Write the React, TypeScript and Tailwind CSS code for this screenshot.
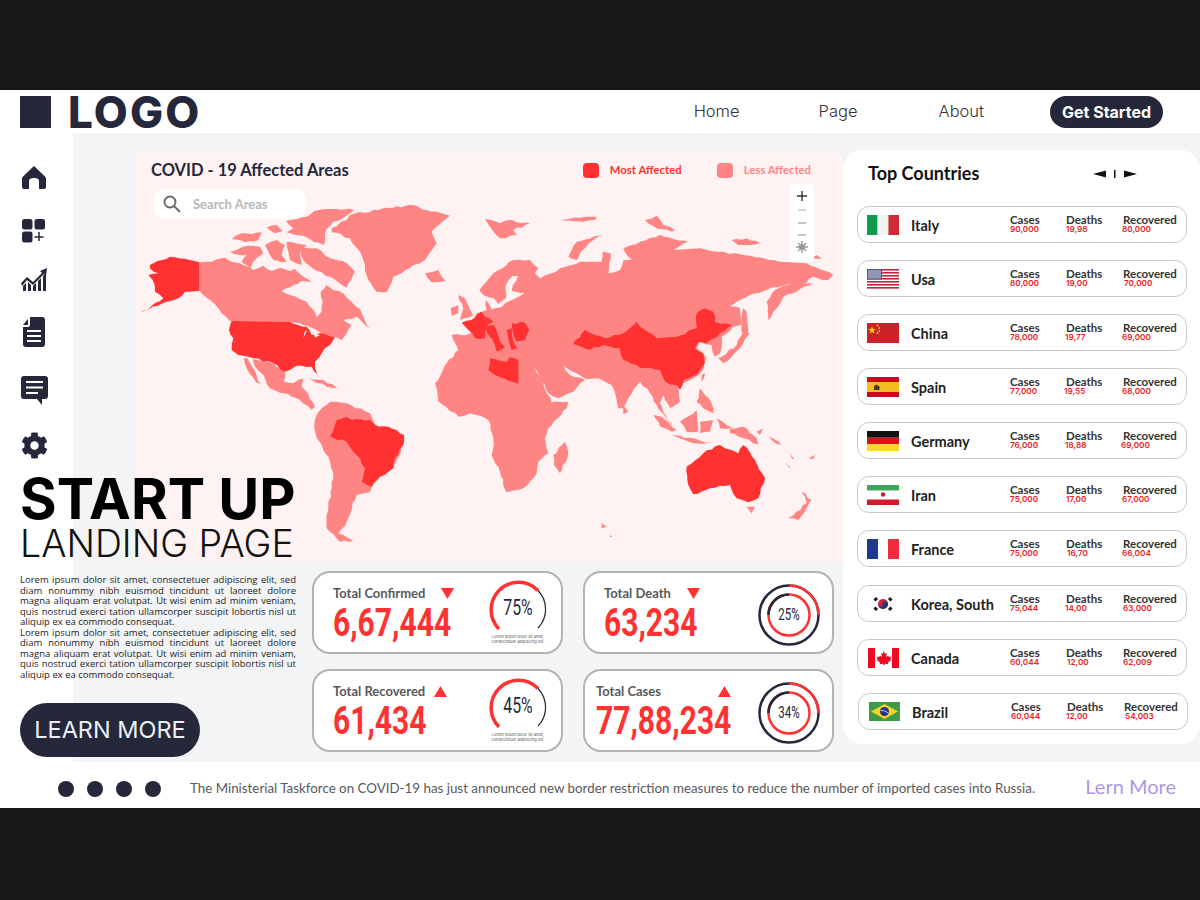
import { FaCog } from 'react-icons/fa';

const NAVY = '#25273a';
const RED = '#ff3131';
const PINK = '#ff8585';
const PANEL = '#fef2f3';

type Country = {
  name: string;
  flag: string;
  cases: string;
  deaths: string;
  recovered: string;
  // little nudges, the values don't line up with their labels in the design
  dOff: number;
  rOff: number;
};

const countries: Country[] = [
  { name: 'Italy', flag: 'it', cases: '90,000', deaths: '19,98', recovered: '80,000', dOff: 0, rOff: -1 },
  { name: 'Usa', flag: 'us', cases: '80,000', deaths: '19,00', recovered: '70,000', dOff: 0, rOff: 1 },
  { name: 'China', flag: 'cn', cases: '78,000', deaths: '19,77', recovered: '69,000', dOff: -1, rOff: -1 },
  { name: 'Spain', flag: 'es', cases: '77,000', deaths: '19,55', recovered: '68,000', dOff: -2, rOff: -1 },
  { name: 'Germany', flag: 'de', cases: '76,000', deaths: '18,88', recovered: '69,000', dOff: -1, rOff: -2 },
  { name: 'Iran', flag: 'ir', cases: '75,000', deaths: '17,00', recovered: '67,000', dOff: 0, rOff: -1 },
  { name: 'France', flag: 'fr', cases: '75,000', deaths: '16,70', recovered: '66,004', dOff: 1, rOff: -1 },
  { name: 'Korea, South', flag: 'kr', cases: '75,044', deaths: '14,00', recovered: '63,000', dOff: -1, rOff: 0 },
  { name: 'Canada', flag: 'ca', cases: '60,044', deaths: '12,00', recovered: '62,009', dOff: 1, rOff: 0 },
  { name: 'Brazil', flag: 'br', cases: '60,044', deaths: '12,00', recovered: '54,003', dOff: -1, rOff: 1 },
];

const lorem = [
  'Lorem ipsum dolor sit amet, consectetuer adipiscing elit, sed',
  'diam nonummy nibh euismod tincidunt ut laoreet dolore',
  'magna aliquam erat volutpat. Ut wisi enim ad minim veniam,',
  'quis nostrud exerci tation ullamcorper suscipit lobortis nisl ut',
];

// roughens a traced outline so edges read as coastline; long straight borders stay straight
function coast(pts: string) {
  const n = pts.match(/-?\d+(\.\d+)?/g)!.map(Number);
  let d = '';
  for (let i = 0; i < n.length; i += 2) {
    const x = n[i];
    const y = n[i + 1];
    const dx = n[(i + 2) % n.length] - x;
    const dy = n[(i + 3) % n.length] - y;
    const len = Math.hypot(dx, dy);
    d += `${i ? 'L' : 'M'}${x} ${y}`;
    if ((Math.abs(dx) < 6 || Math.abs(dy) < 6) && len > 60) continue;
    const steps = Math.floor(len / 13);
    for (let s = 1; s < steps; s++) {
      const r = Math.sin((x + s) * 12.9898 + (y + s) * 78.233) * 43758.5453;
      const o = (r - Math.floor(r) - 0.5) * Math.min(len * 0.2, 7);
      const t = s / steps;
      d += `L${(x + dx * t - (dy / len) * o).toFixed(1)} ${(y + dy * t + (dx / len) * o).toFixed(1)}`;
    }
  }
  return d + 'z';
}

// traced at 3x from x=130 y=145
const westLight = [
  '208 352 245 350 285 338 310 352 345 362 370 375 400 362 425 378 450 368 480 378 495 372 520 395 545 412 515 408 490 420 455 438 480 450 510 462 530 470 548 492 560 517 575 500 578 470 572 440 590 420 610 435 640 445 665 470 690 492 700 515 720 552 700 535 680 515 640 525 665 540 650 565 635 585 615 575 585 572 545 548 520 540 480 530 300 528 265 490 240 465 208 437',
  '305 283 335 265 365 268 395 262 385 285 345 292',
  '300 322 330 310 355 302 390 305 400 325 380 340 362 368 335 352 350 330',
  '410 248 440 240 458 258 435 265',
  '405 300 440 285 465 300 455 330 470 350 430 345 415 320',
  '470 290 530 300 510 320 515 360 480 345 475 320',
  '468 228 500 222 530 215 565 195 620 192 672 196 635 222 610 230 590 252 582 300 550 290 520 272 470 262 490 250',
  '510 312 560 310 600 340 650 355 675 380 650 428 600 395 550 372 520 345',
  '605 250 650 225 660 210 760 190 840 180 890 195 960 212 905 260 920 295 885 345 850 360 790 395 770 442 740 440 715 405 695 330 660 280 605 262',
  '885 385 925 375 947 408 905 412',
  '368 642 430 655 465 680 462 710 490 715 505 705 520 700 515 725 525 735 555 785 545 795 510 765 460 745 420 730 400 690 375 665',
  '342 640 352 640 392 717 378 712 350 670',
  '535 700 580 705 635 732 590 725',
  '560 810 600 770 650 775 720 805 735 840 822 870 815 910 790 965 745 1000 720 1040 680 1050 650 1130 625 1165 670 1188 630 1190 590 1150 590 1110 610 1000 600 950 560 880 553 850',
];

const westDark = [
  '60 360 120 335 208 352 208 437 165 440 145 460 110 470 30 505 100 460 75 440 68 405 55 390 85 385 60 370',
  '305 528 480 530 530 545 545 570 570 565 615 575 600 600 575 625 555 650 562 688 545 665 500 662 465 680 430 655 370 640 325 630 305 615 310 580 297 555',
  '620 825 650 815 665 825 720 825 745 845 775 845 822 870 820 900 795 940 790 970 750 995 725 1025 695 1010 705 970 680 930 650 890 600 875',
];

// traced at 3x from x=480 y=145
const eastLight = [
  '-85 570 -40 570 -20 560 -10 505 5 500 20 495 18 465 35 493 65 487 90 467 135 443 95 437 114 393 98 393 78 420 78 460 55 477 42 460 25 457 10 450 -2 435 10 420 40 385 100 345 150 345 175 370 165 385 180 400 215 385 240 370 300 350 365 350 368 320 392 325 385 385 420 375 430 345 455 345 430 310 480 290 540 270 625 290 580 315 660 310 720 320 790 330 880 345 900 350 980 355 1060 390 1045 405 1000 395 965 420 920 418 860 435 810 450 770 470 750 485 780 490 785 540 760 545 725 575 720 625 705 635 695 600 660 590 650 610 680 640 665 680 620 710 590 720 600 770 570 790 550 750 540 775 578 848 530 780 510 745 480 710 440 770 430 790 415 790 395 720 355 700 318 702 290 685 250 662 270 690 315 705 280 740 235 760 205 745 165 670 190 718 215 772 265 770 260 790 205 850 195 880 205 925 175 950 170 985 130 1030 80 1042 60 980 35 930 40 880 25 825 0 812 -30 805 -65 815 -125 770 -135 715 -100 655 -65 615',
  '1000 415 950 440 910 455 865 525 860 470 885 435 918 420',
  '220 930 255 890 265 925 240 985 222 960',
  '-65 450 -45 460 -20 510 -60 525 -50 490',
  '-88 490 -65 480 -65 505 -85 512',
  '15 222 60 235 85 225 150 235 100 255 110 270 60 280',
  '240 225 300 218 350 215 345 225 310 230',
  '265 335 290 290 368 270 340 285 302 320 290 345',
  '495 225 530 212 550 240 585 255 575 260 530 250',
  '755 285 800 280 840 295 810 300 775 300',
  '995 340 1010 330 1025 342',
  '790 490 800 500 805 560 790 580 785 540',
  '715 640 770 600 790 560 810 565 780 610 730 655',
  '600 830 650 795 655 860 620 860',
  '520 810 545 815 590 855 575 860 540 845',
  '575 870 640 880 700 895 640 895',
  '660 830 700 825 690 860 660 865',
  '660 730 675 750 695 775 700 805 670 790 650 770',
  '665 690 675 685 665 710',
  '710 820 740 840 770 850 720 850',
  '750 850 790 845 830 880 835 898 790 880 750 865',
  '830 860 850 850 840 870',
  '855 865 905 900 880 890',
  '930 920 945 945 935 940',
  '915 950 935 970 925 965',
  '985 940 1005 930 1000 942',
  '965 1040 995 1065 975 1100 955 1125 925 1120 950 1100 980 1075',
  '800 1085 825 1085 815 1105',
  '430 780 445 800 430 808',
  '365 1135 380 1145 365 1150',
  '390 1170 398 1175 390 1176',
];

const eastDark = [
  '620 965 670 925 720 900 755 915 775 925 790 900 825 945 855 1000 835 1060 805 1072 770 1060 750 1020 690 1030 640 1048 625 1020',
  '280 597 315 555 345 570 375 580 430 565 470 530 495 555 530 580 590 575 650 550 650 505 675 490 700 500 705 530 755 540 720 565 680 595 655 590 645 610 670 625 675 655 650 690 610 705 600 735 590 720 555 710 540 675 480 668 430 645 420 610 370 600 330 615',
];

// europe close up, 3x from x=430 y=270
const europeDark = [
  '95 158 125 150 155 125 165 140 190 155 165 175 165 205 135 205 115 180',
  '160 170 190 165 210 215 225 232 200 245 195 225 175 195',
  '230 180 245 175 255 225 262 235 245 240 235 205',
  '245 160 285 158 298 180 285 210 260 215 248 185',
  '180 265 230 275 240 262 265 270 265 342 195 315 175 300',
];

function Flag({ code }: { code: string }) {
  return (
    <svg width="32" height="20" viewBox="0 0 32 20" className="shrink-0">
      {code === 'it' && (
        <>
          <rect width="10.6" height="20" fill="#0f9a50" />
          <rect x="10.6" width="10.8" height="20" fill="#f1f2f2" />
          <rect x="21.4" width="10.6" height="20" fill="#ce2b37" />
        </>
      )}
      {code === 'us' && (
        <>
          <rect width="32" height="20" fill="#fff" />
          {[0, 3, 6, 9, 12, 15, 18].map((y) => (
            <rect key={y} y={y} width="32" height="1.6" fill="#c8223f" />
          ))}
          <rect width="15" height="10.5" fill="#4a5a8c" />
          <rect x="1" y="1" width="13" height="8.5" fill="#8d97b8" />
        </>
      )}
      {code === 'cn' && (
        <>
          <rect width="32" height="20" fill="#ce2029" />
          <polygon points="5,3 6,6 9,6 6.5,7.8 7.5,10.6 5,9 2.5,10.6 3.5,7.8 1,6 4,6" fill="#fcd116" />
          <circle cx="10.5" cy="2.5" r=".9" fill="#fcd116" />
          <circle cx="12.3" cy="5" r=".9" fill="#fcd116" />
          <circle cx="12.3" cy="8" r=".9" fill="#fcd116" />
          <circle cx="10.5" cy="10" r=".9" fill="#fcd116" />
        </>
      )}
      {code === 'es' && (
        <>
          <rect width="32" height="20" fill="#c60b1e" />
          <rect y="5" width="32" height="10" fill="#f5bd1f" />
          <path d="M7 13v-3.500l2-2 2 1 1.500 1V13z" fill="#4a3a1e" />
        </>
      )}
      {code === 'de' && (
        <>
          <rect width="32" height="6.700" fill="#111" />
          <rect y="6.700" width="32" height="6.600" fill="#dd0f18" />
          <rect y="13.300" width="32" height="6.700" fill="#fbd923" />
        </>
      )}
      {code === 'ir' && (
        <>
          <rect width="32" height="5.500" fill="#3fa55a" />
          <rect y="14.500" width="32" height="5.500" fill="#d11a2a" />
          <circle cx="16" cy="9.500" r="2.200" fill="#d11a2a" />
        </>
      )}
      {code === 'fr' && (
        <>
          <rect width="11" height="20" fill="#1e3a8f" />
          <rect x="21" width="11" height="20" fill="#ef2b3d" />
        </>
      )}
      {code === 'kr' && (
        <>
          <circle cx="16" cy="10" r="5" fill="#c8233c" />
          <path d="M11 10a5 5 0 0 0 10 0 2.500 2.500 0 0 0-5 0 2.500 2.500 0 0 1-5 0z" fill="#22397f" />
          <g stroke="#111" strokeWidth="2.800">
            <path d="M7.500 6.500l2.500-2.500" />
            <path d="M22 4l2.500 2.500" />
            <path d="M7.500 13.500l2.500 2.500" />
            <path d="M22 16l2.500-2.500" />
          </g>
        </>
      )}
      {code === 'ca' && (
        <>
          <rect x="1" width="7" height="20" fill="#ee0a24" />
          <rect x="25" width="7" height="20" fill="#ee0a24" />
          <path d="M16.500 3l1.600 2.800 1.700-.8-.6 4 2-1.600.6 1.500 2.500-.4-.9 2.700 1 .6-3.600 3 .4 1.400-3.500-.5V17h-1.400v-1.300l-3.500.5.4-1.400-3.600-3 1-.6-.9-2.700 2.500.4.6-1.500 2 1.600-.6-4 1.700.8z" fill="#ee0a24" />
        </>
      )}
      {code === 'br' && (
        <>
          <rect x="1" width="31" height="19" fill="#3c9a48" />
          <polygon points="16.500,2 30,9.500 16.500,17 3,9.500" fill="#f5d327" />
          <circle cx="16.500" cy="9.500" r="4.500" fill="#2b2f86" />
          <path d="M12.500 8.500q4-.5 8 2.500" stroke="#fff" strokeWidth=".7" fill="none" />
        </>
      )}
    </svg>
  );
}

function Stat({ label, value, width, off }: { label: string; value: string; width: string; off: number }) {
  return (
    <div className={`${width} shrink-0 -mt-[1px]`}>
      <div className="whitespace-nowrap text-[11.500px] font-bold leading-[11px] text-[#333] [font-family:'Lato',sans-serif]">{label}</div>
      <div className="text-[8.200px] font-semibold leading-[9px] text-[#e8231f] [font-family:'Inter',sans-serif]" style={{ marginLeft: off }}>
        {value}
      </div>
    </div>
  );
}

function CountryRow({ c, nudge }: { c: Country; nudge?: boolean }) {
  return (
    <div
      className={`flex h-[37px] w-[330px] shrink-0 items-center rounded-[12px] border border-[#c9c9c9] bg-white pl-[9px] ${
        nudge ? 'ml-[15px]' : 'ml-[14px]'
      }`}
    >
      <Flag code={c.flag} />
      <div className="ml-[12px] mt-[3px] w-[99px] whitespace-nowrap text-[14.500px] font-bold text-[#222] [font-family:'Lato',sans-serif]">{c.name}</div>
      <Stat label="Cases" value={c.cases} width="w-[56px]" off={0} />
      <Stat label="Deaths" value={c.deaths} width="w-[57px]" off={c.dOff} />
      <Stat label="Recovered" value={c.recovered} width="w-[60px]" off={c.rOff} />
    </div>
  );
}

function WorldMap() {
  return (
    <svg viewBox="135 151 708 411" className="absolute inset-0 h-full w-full">
      <g transform="translate(130 145) scale(0.3333)">
        <g fill={PINK}>
          {westLight.map((p) => (
            <path key={p} d={coast(p)} />
          ))}
        </g>
        <g fill={RED}>
          {westDark.map((p) => (
            <path key={p} d={coast(p)} />
          ))}
        </g>
        <path d="M520 580l4-20 8-5-6 12zM550 565l20 5-14 8z" fill={PANEL} />
      </g>
      <g transform="translate(480 145) scale(0.3333)">
        <g fill={PINK}>
          {eastLight.map((p) => (
            <path key={p} d={coast(p)} />
          ))}
        </g>
        <g fill={RED}>
          {eastDark.map((p) => (
            <path key={p} d={coast(p)} />
          ))}
        </g>
      </g>
      <g transform="translate(430 270) scale(0.3333)" fill={RED}>
        {europeDark.map((p) => (
          <path key={p} d={coast(p)} />
        ))}
      </g>
    </svg>
  );
}

function ZoomControl() {
  return (
    <div className="absolute right-[29px] top-[33px] flex h-[78px] w-[25px] flex-col items-center rounded-[4px] bg-white pt-[5px]">
      <svg width="14" height="68" viewBox="0 0 14 68">
        <path d="M2 7h10M7 2v10" stroke="#333" strokeWidth="1.400" />
        <path d="M3 21h8" stroke="#aaa" strokeWidth="1" />
        <path d="M3 34h8M3 46h8" stroke="#888" strokeWidth="1" />
        <g stroke="#999" strokeWidth="1.400">
          <path d="M7 52v12M1 58h12M3 54l8 8M11 54l-8 8" />
        </g>
        <circle cx="7" cy="58" r="3" fill="#999" />
      </svg>
    </div>
  );
}

function Gauge({ pct }: { pct: string }) {
  return (
    <div className="flex w-[70px] flex-col items-center">
      <div className="relative h-[52px] w-[58px]">
        <svg width="58" height="52" viewBox="0 0 58 52" className="absolute inset-0">
          <path d="M10 49A27 27 0 1 1 49 10.500" fill="none" stroke={RED} strokeWidth="3.500" />
          <path d="M49 10.500A27 27 0 0 1 49 48" fill="none" stroke={NAVY} strokeWidth="1.200" />
        </svg>
        <div className="absolute inset-0 mt-[3px] flex scale-x-[.72] items-center justify-center text-[22px] leading-none text-[#25273a] [font-family:'Roboto',sans-serif]">
          {pct}
        </div>
      </div>
      <div className="mt-[2px] whitespace-nowrap text-center text-[4px] leading-[5px] text-[#555] [font-family:'Inter',sans-serif]">
        Lorem ipsum dolor sit amet,
        <br />
        consectetuer adipiscing elit.
      </div>
    </div>
  );
}

function Rings({ pct }: { pct: string }) {
  return (
    <div className="relative h-[62px] w-[62px]">
      <svg width="62" height="62" viewBox="0 0 62 62" className="absolute inset-0">
        <circle cx="31" cy="31" r="29.500" fill="none" stroke={NAVY} strokeWidth="2.500" />
        <path d="M31 1.500A29.500 29.500 0 0 1 60.500 31" fill="none" stroke={RED} strokeWidth="2.500" />
        <circle cx="31" cy="31" r="20.500" fill="none" stroke={RED} strokeWidth="2.500" />
        <path d="M10.500 31A20.500 20.500 0 0 1 31 10.500" fill="none" stroke={NAVY} strokeWidth="2.500" />
      </svg>
      <div className="absolute inset-0 flex scale-x-[.72] items-center justify-center text-[16px] leading-none text-[#25273a] [font-family:'Roboto',sans-serif]">
        {pct}
      </div>
    </div>
  );
}

function Tri({ up }: { up?: boolean }) {
  return (
    <svg width="13" height="11" viewBox="0 0 13 11" className="shrink-0">
      <path d={up ? 'M6.500 0L13 11H0z' : 'M0 0h13L6.500 11z'} fill={RED} />
    </svg>
  );
}

function StatCard({
  title,
  value,
  pad,
  triGap,
  up,
  right,
}: {
  title: string;
  value: string;
  pad: string;
  triGap: string;
  up?: boolean;
  right: React.ReactNode;
}) {
  return (
    <div className={`flex h-[83px] w-[251px] items-start justify-between rounded-[18px] border-2 border-[#b3b3b3] bg-white ${pad}`}>
      <div className="pt-[12px]">
        <div className="flex items-center">
          <span className="whitespace-nowrap text-[13px] font-bold leading-[16px] text-[#58595b] [font-family:'Lato',sans-serif]">{title}</span>
          <span className={triGap}>
            <Tri up={up} />
          </span>
        </div>
        {/* no narrow face installed, so squeeze the figures */}
        <div className="mt-[3px] h-[38px] w-0 origin-left scale-x-[.79] whitespace-nowrap text-[38px] font-bold leading-[38px] text-[#ff3131] [font-family:'Roboto',sans-serif]">
          {value}
        </div>
      </div>
      {right}
    </div>
  );
}

export default function App() {
  return (
    <div className="relative h-[900px] w-[1200px] overflow-hidden bg-[#171717] pt-[90px]">
      <div className="flex h-[718px] flex-col bg-white">
        <header className="flex h-[43px] items-center bg-white pl-[20px]">
          <div className="h-[32px] w-[31px] bg-[#25273a]" />
          <div className="ml-[17px] text-[44px] font-extrabold leading-none tracking-[2.200px] text-[#25273a] [font-family:'Inter',sans-serif]">LOGO</div>
          <nav className="ml-auto flex items-center pr-[37px] text-[16.500px] font-light text-[#333] [font-family:'Inter',sans-serif]">
            <span className="mr-[79px]">Home</span>
            <span className="mr-[81px]">Page</span>
            <span className="mr-[66px]">About</span>
            <span className="flex h-[32px] w-[113px] items-center justify-center rounded-full bg-[#25273a] text-[16px] font-bold text-white">Get Started</span>
          </nav>
        </header>

        <div className="flex h-[629px]">
          <aside className="flex w-[73px] shrink-0 flex-col items-center bg-white pr-[5px] text-[#25273a]">
            <svg className="mt-[33px]" width="24" height="23" viewBox="0 0 24 23" fill={NAVY}>
              <path d="M12 0l11 10.500q1 1 1 2V21q0 2-2 2h-5v-8q0-3-5-3t-5 3v8H2q-2 0-2-2v-8.500q0-1 1-2z" />
            </svg>
            <svg className="mt-[30px]" width="24" height="24" viewBox="0 0 24 24" fill={NAVY}>
              <rect width="10.500" height="10.500" rx="2.500" />
              <rect x="12.500" width="10.500" height="10.500" rx="2.500" />
              <rect y="12.500" width="10.500" height="11" rx="2.500" />
              <path d="M17 13v9M12.500 18h9" stroke={NAVY} strokeWidth="1.500" />
            </svg>
            <svg className="mt-[25px]" width="26" height="23" viewBox="0 0 26 23" fill={NAVY}>
              <path d="M2 23v-5l3-3v8zM7 23v-9l3 3v6zM12 23v-5l3-3v8zM17 23V13l3-3v13zM22 23V8l3-3v18z" />
              <path d="M0 15l6-6 6 5L21 5l-2-2 7-3-1 8-2-2-11 11-6-5-5 6z" />
            </svg>
            <svg className="mt-[26px]" width="22" height="30" viewBox="0 0 22 30" fill={NAVY}>
              <path d="M7 0h12q3 0 3 3v24q0 3-3 3H3q-3 0-3-3V10h5q2 0 2-2z" />
              <path d="M0 8l5-6v6z" />
              <path d="M4 14h14M4 19h14M4 24h14" stroke="#fff" strokeWidth="2.200" />
            </svg>
            <svg className="mt-[29px]" width="27" height="29" viewBox="0 0 27 29" fill={NAVY}>
              <path d="M3 0h21q3 0 3 3v17q0 3-3 3h-3v6l-5-6H3q-3 0-3-3V3q0-3 3-3z" />
              <path d="M5 6h17M5 11.500h17M5 17h12" stroke="#fff" strokeWidth="2.200" />
            </svg>
            <FaCog className="mt-[27px]" size={27} color={NAVY} />
          </aside>

          <div className="flex flex-1 bg-[#f2f4f6]">
            <div className="ml-[62px] w-[708px] shrink-0 pt-[18px]">
              <section className="relative h-[411px] rounded-tr-[10px] bg-[#fef2f3]">
                <WorldMap />
                <div className="relative flex items-center pl-[16px] pt-[9px]">
                  <h2 className="text-[16.500px] font-bold leading-[20px] text-[#25273a] [font-family:'Lato',sans-serif]">COVID - 19 Affected Areas</h2>
                  <div className="ml-auto flex items-center pr-[32px] text-[11.300px] font-bold [font-family:'Lato',sans-serif]">
                    <span className="h-[15px] w-[16px] rounded-[4px] bg-[#ff3131]" />
                    <span className="ml-[11px] w-[107px] text-[#ff3131]">Most Affected</span>
                    <span className="h-[15px] w-[16px] rounded-[4px] bg-[#ff8585]" />
                    <span className="ml-[11px] text-[#ff8585]">Less Affected</span>
                  </div>
                </div>
                <div className="relative ml-[19px] mt-[9px] flex h-[30px] w-[152px] items-center rounded-[10px] bg-white pl-[9px]">
                  <svg width="18" height="18" viewBox="0 0 18 18" fill="none" stroke="#666" strokeWidth="1.800">
                    <circle cx="7" cy="7" r="5.500" />
                    <path d="M11 11l6 6" />
                  </svg>
                  <span className="ml-[12px] mt-[1px] text-[13px] font-bold text-[#b7b7b7] [font-family:'Lato',sans-serif]">Search Areas</span>
                </div>
                <ZoomControl />
              </section>

              <div className="ml-[177px] mt-[9px] grid w-[522px] grid-cols-[251px_251px] gap-x-[20px] gap-y-[15px]">
                <StatCard
                  title="Total Confirmed"
                  value="6,67,444"
                  pad="pl-[19px] pr-[8px]"
                  triGap="ml-[16px]"
                  right={
                    <div className="pt-[7px]">
                      <Gauge pct="75%" />
                    </div>
                  }
                />
                <StatCard
                  title="Total Death"
                  value="63,234"
                  pad="pl-[19px] pr-[12px]"
                  triGap="ml-[16px]"
                  right={
                    <div className="pt-[11px]">
                      <Rings pct="25%" />
                    </div>
                  }
                />
                <StatCard
                  title="Total Recovered"
                  value="61,434"
                  up
                  pad="pl-[19px] pr-[8px]"
                  triGap="ml-[9px]"
                  right={
                    <div className="pt-[7px]">
                      <Gauge pct="45%" />
                    </div>
                  }
                />
                <StatCard
                  title="Total Cases"
                  value="77,88,234"
                  up
                  pad="pl-[11px] pr-[12px]"
                  triGap="ml-[57px]"
                  right={
                    <div className="pt-[11px]">
                      <Rings pct="34%" />
                    </div>
                  }
                />
              </div>
            </div>

            <section className="mt-[17px] flex h-[594px] w-[357px] shrink-0 flex-col rounded-[20px] bg-white">
              <div className="flex h-[56px] shrink-0 items-center pb-[9px] pl-[25px]">
                <h3 className="text-[18px] font-bold text-[#111] [font-family:'Lato',sans-serif]">Top Countries</h3>
                <svg className="ml-[114px]" width="44" height="8" viewBox="0 0 44 8" fill="#111">
                  <path d="M0 4l13-3.500v7zM21 0h1.500v8H21zM31 .500L44 4 31 7.500z" />
                </svg>
              </div>
              {countries.map((c, i) => (
                <div key={c.name} className={i === 6 ? 'pb-[18px]' : i === 9 ? '' : 'pb-[17px]'}>
                  <CountryRow c={c} nudge={i === 9} />
                </div>
              ))}
            </section>
          </div>
        </div>

        <footer className="flex h-[46px] items-center bg-white pl-[58px] pt-[6px]">
          <div className="mt-[1px] flex gap-[13px]">
            {[0, 1, 2, 3].map((d) => (
              <span key={d} className="h-[16px] w-[16px] rounded-full bg-[#25273a]" />
            ))}
          </div>
          <p className="ml-[29px] whitespace-nowrap text-[13.350px] text-[#58595b] [font-family:'Lato',sans-serif]">
            The Ministerial Taskforce on COVID-19 has just announced new border restriction measures to reduce the number of imported cases into Russia.
          </p>
          <span className="ml-auto -mt-[4px] pr-[24px] text-[20px] text-[#ad97e3] [font-family:'Lato',sans-serif]">Lern More</span>
        </footer>
      </div>

      {/* hero copy sits over the sidebar and the map panel */}
      <div className="absolute left-[20px] top-[474px] w-[276px] [font-family:'Inter',sans-serif]">
        <h1 className="whitespace-nowrap text-[56px] font-bold leading-[50px] text-black">START UP</h1>
        <div className="whitespace-nowrap text-[37.500px] font-light leading-[40px] text-[#111]">LANDING PAGE</div>
        <div className="mt-[11px] text-[9.500px] leading-[10.500px] text-[#222] [font-family:'Open_Sans',sans-serif]">
          {[0, 1].map((k) => (
            <div key={k}>
              {lorem.map((l) => (
                <div key={l} className="text-justify [text-align-last:justify]">
                  {l}
                </div>
              ))}
              <div>aliquip ex ea commodo consequat.</div>
            </div>
          ))}
        </div>
        <div className="mt-[23px] flex h-[54px] w-[180px] items-center justify-center rounded-full bg-[#25273a] text-[23.500px] text-[#e9f0f7]">LEARN MORE</div>
      </div>
    </div>
  );
}
